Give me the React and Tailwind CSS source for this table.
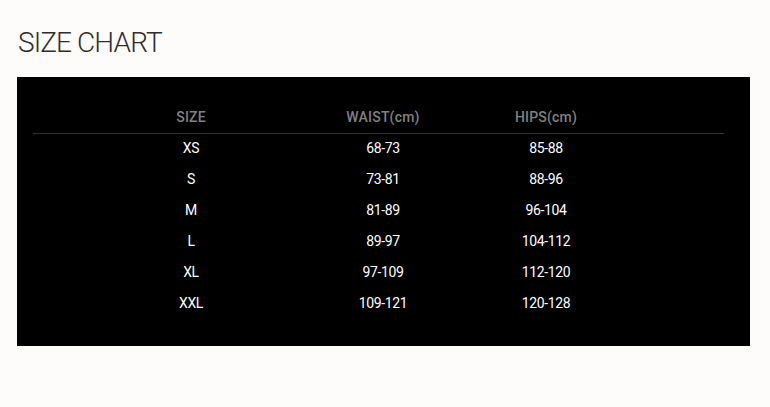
import React from "react";

const rows = [
  ["XS", "68-73", "85-88"],
  ["S", "73-81", "88-96"],
  ["M", "81-89", "96-104"],
  ["L", "89-97", "104-112"],
  ["XL", "97-109", "112-120"],
  ["XXL", "109-121", "120-128"],
];

const Row = ({ cells, head }) => (
  <div
    className={
      head
        ? "flex items-center h-[24px] text-[14px] font-medium text-[#808080] tracking-[0.2px]"
        : "flex items-center h-[31px] pb-[5px] text-[14px] text-white tracking-[-0.4px]"
    }
  >
    <div className="w-[120px] ml-[98px] text-center">{cells[0]}</div>
    <div className="w-[120px] ml-[72px] text-center">{cells[1]}</div>
    <div className="w-[120px] ml-[43px] text-center">{cells[2]}</div>
  </div>
);

export default function App() {
  return (
    <div
      className="w-[770px] h-[407px] bg-[#fefbfb] px-[17px] overflow-hidden"
      style={{ fontFamily: "Roboto, 'Noto Sans', sans-serif" }}
    >
      {/* title */}
      <h1 className="pt-[29px] text-[28px] leading-[28px] font-light text-[#2e2e2e] tracking-[-0.9px] pl-[1px]">
        SIZE CHART
      </h1>
      {/* chart */}
      <div className="mt-[20px] w-[733px] h-[269px] bg-black pl-[16px] pr-[26px] pt-[28px]">
        <Row head cells={["SIZE", "WAIST(cm)", "HIPS(cm)"]} />
        <div className="mt-[4px] mb-[1px] h-[1px] bg-[#333333]" />
        {rows.map((r) => (
          <Row key={r[0]} cells={r} />
        ))}
      </div>
    </div>
  );
}
